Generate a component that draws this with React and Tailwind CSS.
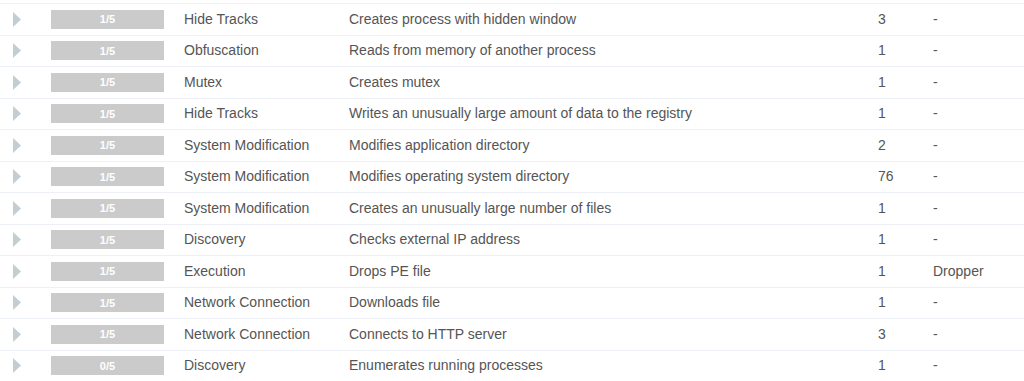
const rows = [
  ['1/5', 'Hide Tracks', 'Creates process with hidden window', '3', '-'],
  ['1/5', 'Obfuscation', 'Reads from memory of another process', '1', '-'],
  ['1/5', 'Mutex', 'Creates mutex', '1', '-'],
  ['1/5', 'Hide Tracks', 'Writes an unusually large amount of data to the registry', '1', '-'],
  ['1/5', 'System Modification', 'Modifies application directory', '2', '-'],
  ['1/5', 'System Modification', 'Modifies operating system directory', '76', '-'],
  ['1/5', 'System Modification', 'Creates an unusually large number of files', '1', '-'],
  ['1/5', 'Discovery', 'Checks external IP address', '1', '-'],
  ['1/5', 'Execution', 'Drops PE file', '1', 'Dropper'],
  ['1/5', 'Network Connection', 'Downloads file', '1', '-'],
  ['1/5', 'Network Connection', 'Connects to HTTP server', '3', '-'],
  ['0/5', 'Discovery', 'Enumerates running processes', '1', '-'],
]

const App = () => {
  return (
    <div className="w-[1024px] h-[381px] overflow-hidden bg-white pt-[3px] font-['Liberation_Sans',Arial,sans-serif] text-[14px] text-[#555]">
      {rows.map(([score, category, desc, count, tag], i) => (
        <div key={i} className="flex items-center h-[31.5px] border-t border-[#eef0f7]">
          <div className="w-[51px] pl-[13px] flex items-center">
            <svg width="8" height="15" viewBox="0 0 8 15">
              <path d="M0 0 L8 7.5 L0 15 Z" fill="#c3ced4" />
            </svg>
          </div>
          <div className="w-[113px] h-[19px] bg-[#cbcbcb] flex items-center justify-center text-white text-[11px] font-bold">
            {score}
          </div>
          <div className="w-[185px] pl-[20px]">{category}</div>
          <div className="w-[529px]">{desc}</div>
          <div className="w-[55px]">{count}</div>
          <div>{tag}</div>
        </div>
      ))}
    </div>
  )
}

export default App
